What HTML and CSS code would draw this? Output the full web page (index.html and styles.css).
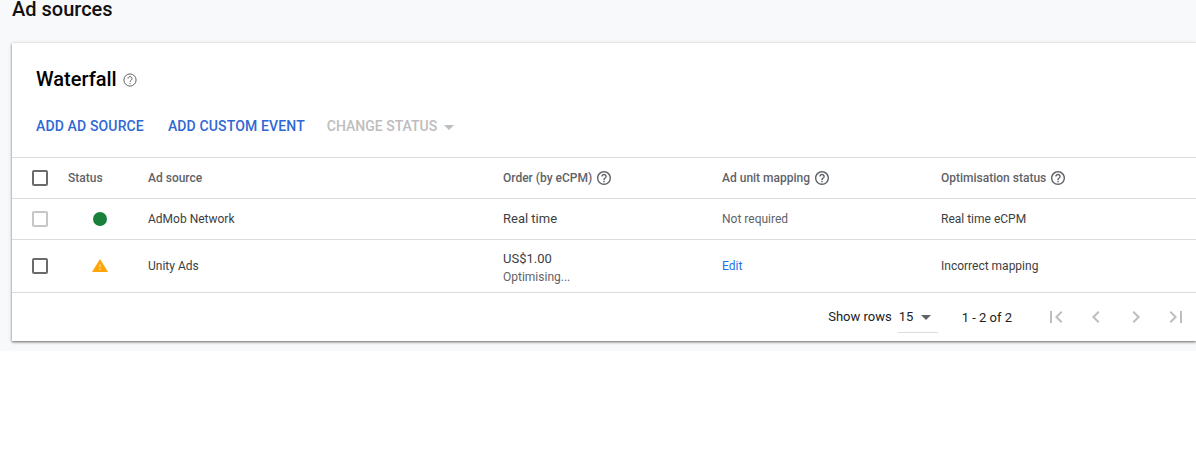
FILE: index.html
```html
<!DOCTYPE html>
<html lang="en">
<head>
<meta charset="utf-8">
<title>Ad sources</title>
<link rel="stylesheet" href="styles.css">
</head>
<body>
<svg class="defs" width="0" height="0">
  <symbol id="help" viewBox="2 2 20 20"><path d="M11 18h2v-2h-2v2zm1-16C6.480 2 2 6.480 2 12s4.480 10 10 10 10-4.480 10-10S17.520 2 12 2zm0 18c-4.410 0-8-3.590-8-8s3.590-8 8-8 8 3.590 8 8-3.590 8-8 8zm0-14c-2.210 0-4 1.790-4 4h2c0-1.100.9-2 2-2s2 .9 2 2c0 2-3 1.750-3 5h2c0-2.250 3-2.500 3-5 0-2.210-1.790-4-4-4z"/></symbol>
</svg>
<main class="page">
  <h1 class="page-title">Ad sources</h1>
  <section class="card">
    <header class="card-header">
      <h2 class="card-title">Waterfall</h2>
      <svg class="help help-small" viewBox="0 0 14 14"><circle cx="7" cy="7" r="6.100"/><path d="M5 5.600a2 2 0 1 1 3.300 1.500C7.500 7.700 7 8 7 8.900M7 9.900v1.100"/></svg>
    </header>
    <div class="actions">
      <button class="action">Add ad source</button>
      <button class="action">Add custom event</button>
      <button class="action change" disabled>Change status <i class="caret"></i></button>
    </div>
    <div class="row head">
      <span class="checkbox"></span>
      <span>Status</span>
      <span>Ad source</span>
      <span class="label">Order (by eCPM)<svg class="help"><use href="#help"/></svg></span>
      <span class="label">Ad unit mapping<svg class="help"><use href="#help"/></svg></span>
      <span class="label">Optimisation status<svg class="help"><use href="#help"/></svg></span>
    </div>
    <div class="row">
      <span class="checkbox disabled"></span>
      <span class="status"><i class="dot"></i></span>
      <span>AdMob Network</span>
      <span class="order">Real time</span>
      <span class="muted">Not required</span>
      <span>Real time eCPM</span>
    </div>
    <div class="row tall">
      <span class="checkbox"></span>
      <span class="status"><svg class="warning" viewBox="1 2 22 19" preserveAspectRatio="none"><path d="M1 21h22L12 2z"/><path class="mark" d="M11 10h2v4h-2zM11 16h2v2h-2z"/></svg></span>
      <span>Unity Ads</span>
      <span class="stack"><span class="order">US$1.00</span><span class="muted">Optimising...</span></span>
      <a class="link">Edit</a>
      <span>Incorrect mapping</span>
    </div>
    <footer class="pager">
      <span class="show">Show rows</span>
      <span class="select">15 <i class="caret"></i></span>
      <span class="range">1 - 2 of 2</span>
      <nav class="nav">
        <svg viewBox="0 0 24 24"><path d="M18.410 16.590L13.820 12l4.590-4.590L17 6l-6 6 6 6zM6 6h2v12H6z"/></svg>
        <svg viewBox="0 0 24 24"><path d="M15.410 7.410L14 6l-6 6 6 6 1.410-1.410L10.830 12z"/></svg>
        <svg viewBox="0 0 24 24"><path d="M10 6L8.590 7.410 13.170 12l-4.580 4.590L10 18l6-6z"/></svg>
        <svg viewBox="0 0 24 24"><path d="M5.590 7.410L10.180 12l-4.590 4.590L7 18l6-6-6-6zM16 6h2v12h-2z"/></svg>
      </nav>
    </footer>
  </section>
</main>
</body>
</html>
```
FILE: styles.css
```css
* { box-sizing: border-box; }
body { margin: 0; background: #fff; font-family: Roboto, "Liberation Sans", sans-serif; color: #3c4043; }
.defs { display: block; }
.page { height: 351px; padding-left: 12px; background: #f8f9fb; overflow: hidden; }
.page-title { margin: 0; height: 43px; font-size: 20px; line-height: 18px; font-weight: 500; color: #111; }
.card { height: 298px; background: #fff; box-shadow: 0 1px 2px rgba(0,0,0,.45), 0 1px 4px rgba(0,0,0,.22); }
.card-header { display: flex; align-items: center; height: 72px; padding: 0 24px; }
.card-title { margin: 0 6px 0 0; font-size: 20px; line-height: 24px; font-weight: 500; color: #000; }
.help { display: block; flex: none; width: 14px; height: 14px; fill: #5f6368; }
.help-small { margin-top: 2px; fill: none; stroke: #5f6368; stroke-width: 1; }
.actions { display: flex; height: 42px; padding: 3px 24px 0; align-items: flex-start; }
.action { display: flex; align-items: center; margin-right: 24px; border: 0; padding: 0; background: none; font: 500 14px/17px Roboto, sans-serif; letter-spacing: .14px; text-transform: uppercase; color: #2f68d4; white-space: nowrap; }
.change { color: #bdbdbd; margin-left: -2px; letter-spacing: 0; }
.caret { width: 0; height: 0; border: 5px solid transparent; border-top-color: currentColor; border-bottom: 0; margin: 2px 0 0 7px; }
.row { display: grid; grid-template-columns: 36px 80px 355px 219px 219px 1fr; align-items: center; height: 41px; padding-left: 20px; border-top: 1px solid #dadce0; font-size: 12px; line-height: 16px; white-space: nowrap; }
.head { font-weight: 500; color: #5f6368; }
.tall { height: 53px; }
.checkbox { width: 16px; height: 16px; border: 2px solid #6b6b6b; border-radius: 2px; }
.disabled { border-color: #c6c6c6; }
.label { display: flex; align-items: center; gap: 5px; }
.status { display: flex; width: 64px; justify-content: center; }
.dot { width: 14px; height: 14px; border-radius: 50%; background: #188038; }
.warning { width: 16px; height: 13px; margin-bottom: 1px; fill: #ffa50a; }
.mark { fill: #ffd48a; }
.order { font-size: 13px; }
.stack { display: flex; flex-direction: column; line-height: 18px; padding-top: 4px; }
.muted { color: #5f6368; }
.link { color: #1a73e8; }
.pager { display: flex; align-items: center; height: 49px; border-top: 1px solid #dadce0; font-size: 13px; color: #202124; justify-content: flex-end; white-space: nowrap; }
.show { margin: 0 6px 1px 0; }
.select { display: flex; align-items: center; width: 40px; height: 32px; padding-left: 1px; border-bottom: 1px solid #dadce0; }
.select .caret { border-top-color: #5f6368; margin-left: 8px; }
.range { margin: 1px 32px 0 24px; }
.nav { display: flex; gap: 16px; padding-right: 8px; }
.nav svg { width: 24px; height: 24px; fill: #bdbdbd; }
```
